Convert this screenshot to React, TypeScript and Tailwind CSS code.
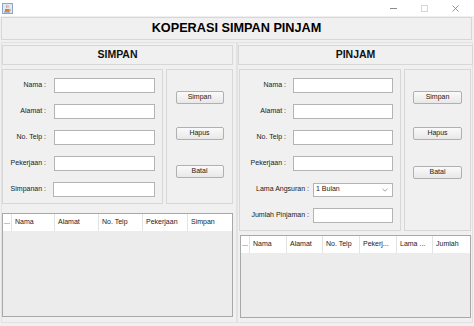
import React from "react";

const font = { fontFamily: '"Liberation Sans", Arial, sans-serif' };

const Field = ({ label, labelW, gap, inputW }: { label: string; labelW: number; gap: number; inputW: number }) => (
  <div className="flex items-center h-[15px]">
    <div className="text-right text-[7px] text-[#1a1a1a] whitespace-nowrap" style={{ width: labelW }}>
      {label}
    </div>
    <div className="h-[15px] bg-white border border-[#b4b4b4]" style={{ marginLeft: gap, width: inputW }} />
  </div>
);

const Btn = ({ text, w, mt }: { text: string; w: number; mt: number }) => (
  <div
    className="h-[13px] border border-[#b0b0b0] rounded-[2px] bg-gradient-to-b from-[#fafafa] to-[#e8e8e8] flex items-center justify-center text-[7px] text-[#1a1a1a]"
    style={{ width: w, marginTop: mt }}
  >
    {text}
  </div>
);

const Table = ({ cols, widths, h }: { cols: string[]; widths: number[]; h: number }) => (
  <div className="border border-[#a8a8a8] bg-[#ececec] flex flex-col" style={{ height: h }}>
    <div className="flex h-[17px] bg-white">
      {cols.map((c, i) => (
        <div
          key={i}
          className={`h-full flex items-center text-[7px] text-[#1a1a1a] whitespace-nowrap overflow-hidden ${
            i > 0 ? "pl-[3px]" : "pl-[1px]"
          } ${i < cols.length - 1 ? "border-r border-[#e3e3e3]" : ""}`}
          style={{ width: widths[i] }}
        >
          {c}
        </div>
      ))}
    </div>
  </div>
);

export default function App() {
  return (
    <div className="w-[474px] h-[326px] overflow-hidden bg-[#f0f0f0]" style={font}>
      {/* title bar */}
      <div className="h-[16px] bg-white flex items-center relative">
        <svg width="11" height="11" viewBox="0 0 11 11" className="ml-[2px] mt-[1px]">
          <rect x="0.5" y="0.5" width="10" height="10" fill="#dfe8f3" stroke="#8aa6c8" />
          <path d="M3 6h4v2.5H3z" fill="#e07b20" />
          <path d="M7 6.5h1.3v1.2H7" fill="none" stroke="#e07b20" strokeWidth="0.6" />
          <path d="M4.5 2.5c-.6.8.6 1.2 0 2.2M6 2.2c-.6.8.6 1.2 0 2.4" stroke="#d9534f" strokeWidth="0.6" fill="none" />
          <path d="M2 9h6" stroke="#4a78b5" strokeWidth="0.8" />
        </svg>
        <div className="ml-auto flex items-center h-full">
          <div className="w-[7px] h-px bg-[#8a8a8a] mr-[24px]" />
          <div className="w-[7px] h-[7px] border border-[#d6d6d6] mr-[24px]" />
          <svg width="7" height="7" viewBox="0 0 7 7" className="mr-[15px]">
            <path d="M0.5 0.5l6 6M6.5 0.5l-6 6" stroke="#8a8a8a" strokeWidth="0.9" />
          </svg>
        </div>
      </div>

      {/* heading */}
      <div className="ml-[1px] mt-[1px] w-[471px] h-[23px] border border-[#d7d7d7] flex items-center justify-center text-[12.7px] font-bold text-black">
        KOPERASI SIMPAN PINJAM
      </div>

      <div className="flex mt-[2px]">
        {/* SIMPAN */}
        <div className="ml-[1px] w-[236px] h-[281px] border border-[#e2e2e2] flex flex-col">
          <div className="mt-[2px] w-[231px] h-[20px] border border-[#d7d7d7] flex items-center justify-center text-[10.5px] font-bold text-[#111]">
            SIMPAN
          </div>
          <div className="flex mt-[4px] gap-[3px]">
            <div className="w-[161px] h-[135px] border border-[#d7d7d7] flex flex-col gap-[11px] pt-[8px]">
              <Field label="Nama :" labelW={43} gap={8} inputW={101} />
              <Field label="Alamat :" labelW={43} gap={8} inputW={101} />
              <Field label="No. Telp :" labelW={43} gap={8} inputW={101} />
              <Field label="Pekerjaan :" labelW={43} gap={8} inputW={101} />
              <Field label="Simpanan :" labelW={43} gap={7} inputW={102} />
            </div>
            <div className="w-[67px] h-[135px] border border-[#d7d7d7] flex flex-col items-center pt-[21px]">
              <Btn text="Simpan" w={48} mt={0} />
              <Btn text="Hapus" w={48} mt={23} />
              <Btn text="Batal" w={48} mt={25} />
            </div>
          </div>
          <div className="mt-[9px] w-[231px]">
            <Table
              cols={["...", "Nama", "Alamat", "No. Telp", "Pekerjaan", "Simpan"]}
              widths={[9, 43, 44, 44, 45, 44]}
              h={104}
            />
          </div>
        </div>

        {/* PINJAM */}
        <div className="w-[236px] h-[281px] border border-[#e2e2e2] flex flex-col">
          <div className="mt-[2px] w-[235px] h-[20px] border border-[#d7d7d7] flex items-center justify-center text-[10.5px] font-bold text-[#111]">
            PINJAM
          </div>
          <div className="flex mt-[4px] ml-[1px] gap-[3px]">
            <div className="w-[162px] h-[162px] border border-[#d7d7d7] flex flex-col gap-[11px] pt-[8px]">
              <Field label="Nama :" labelW={46} gap={7} inputW={100} />
              <Field label="Alamat :" labelW={46} gap={7} inputW={100} />
              <Field label="No. Telp :" labelW={46} gap={7} inputW={100} />
              <Field label="Pekerjaan :" labelW={46} gap={7} inputW={100} />
              <div className="flex items-center h-[15px]">
                <div className="w-[69px] text-right text-[7px] text-[#1a1a1a] whitespace-nowrap">Lama Angsuran :</div>
                <div className="ml-[4px] w-[80px] h-[14px] bg-white border border-[#b4b4b4] flex items-center justify-between pl-[2px] pr-[4px] text-[7px] text-[#1a1a1a]">
                  <span>1 Bulan</span>
                  <svg width="6" height="4" viewBox="0 0 6 4">
                    <path d="M0.5 0.8L3 3.2 5.5 0.8" fill="none" stroke="#8a8a8a" strokeWidth="0.8" />
                  </svg>
                </div>
              </div>
              <Field label="Jumlah Pinjaman :" labelW={69} gap={4} inputW={80} />
            </div>
            <div className="w-[67px] h-[162px] border border-[#d7d7d7] flex flex-col items-center pt-[21px]">
              <Btn text="Simpan" w={49} mt={0} />
              <Btn text="Hapus" w={49} mt={23} />
              <Btn text="Batal" w={49} mt={26} />
            </div>
          </div>
          <div className="mt-[4px] ml-[2px] w-[231px]">
            <Table
              cols={["...", "Nama", "Alamat", "No. Telp", "Pekerj...", "Lama ...", "Jumlah"]}
              widths={[9, 37, 36, 37, 37, 36, 37]}
              h={83}
            />
          </div>
        </div>
      </div>
    </div>
  );
}
